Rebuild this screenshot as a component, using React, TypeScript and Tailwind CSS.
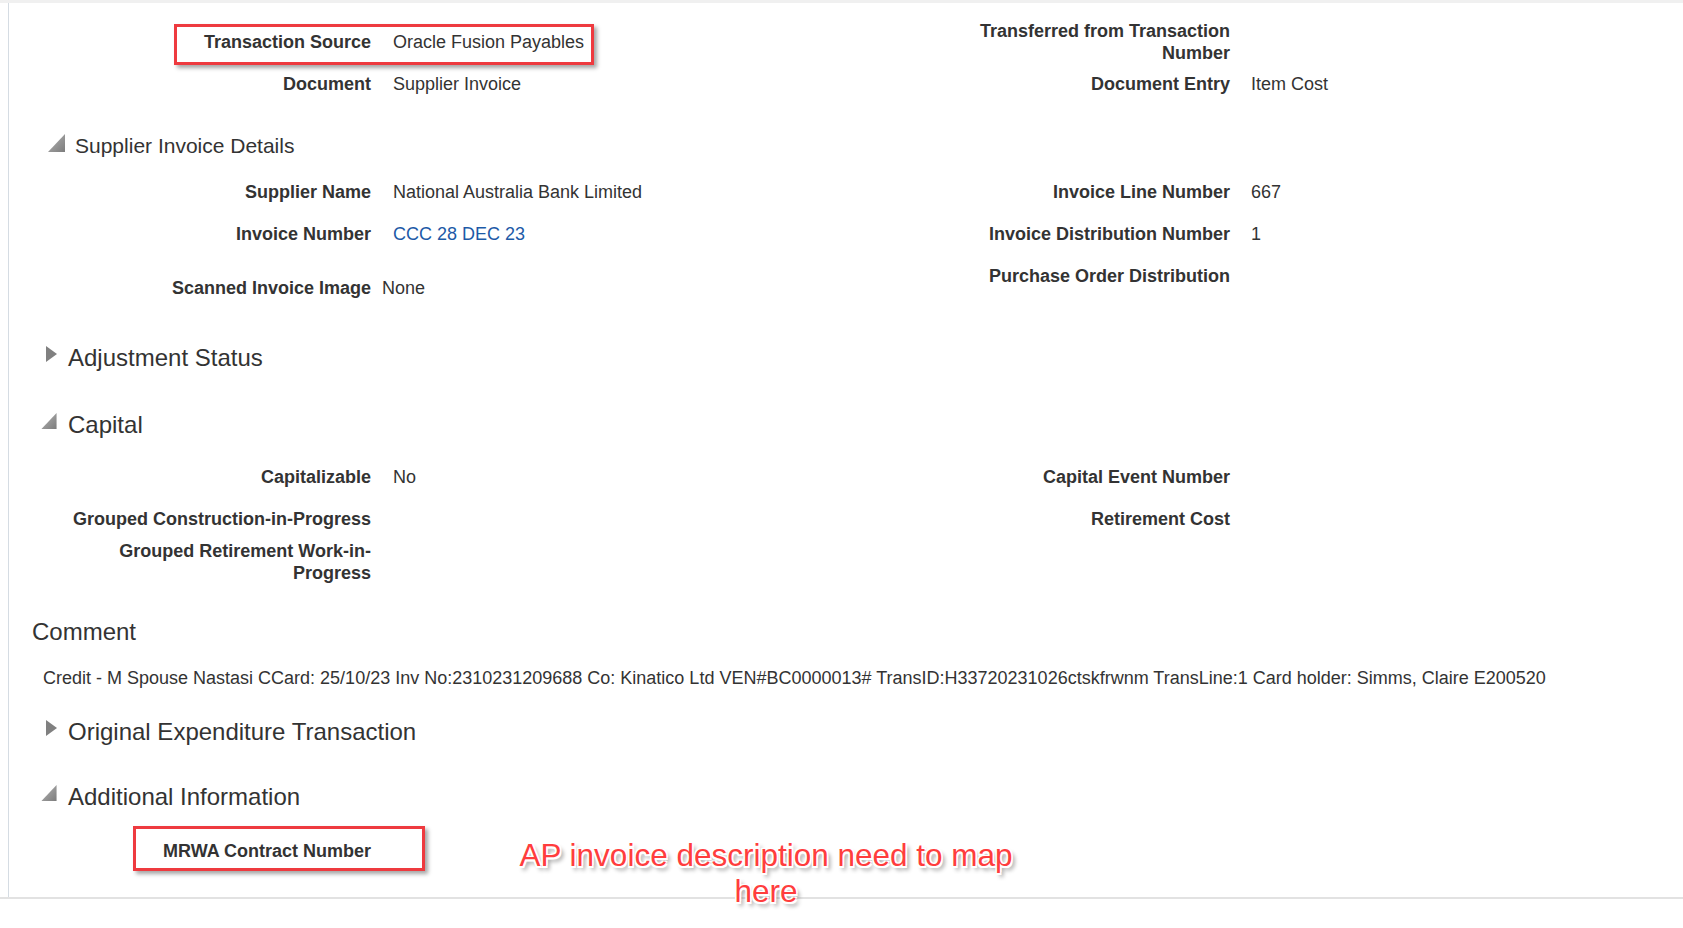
import React from "react";

function Expanded({ className = "" }: { className?: string }) {
  return (
    <svg width="17" height="18" viewBox="0 0 17 18" className={className}>
      <defs>
        <linearGradient id="tg" x1="0" y1="0" x2="1" y2="1">
          <stop offset="0" stopColor="#b5b5b5" />
          <stop offset="1" stopColor="#7c7c7c" />
        </linearGradient>
      </defs>
      <polygon points="17,0 17,18 0,18" fill="url(#tg)" />
    </svg>
  );
}

function Collapsed({ className = "" }: { className?: string }) {
  return (
    <svg width="11" height="16" viewBox="0 0 11 16" className={className}>
      <polygon points="0,0 11,8 0,16" fill="#808080" />
    </svg>
  );
}

function LField({
  label,
  value,
  h = "h-[42px]",
  link = false,
  gap = "pl-[22px]",
}: {
  label: React.ReactNode;
  value?: React.ReactNode;
  h?: string;
  link?: boolean;
  gap?: string;
}) {
  return (
    <div className={`flex items-center ${h}`}>
      <div className="w-[362px] shrink-0 text-right font-bold text-[#333333] leading-[22px]">{label}</div>
      <div className={`${gap} leading-[22px] ${link ? "text-[#1d5aa7]" : "text-[#333333]"}`}>{value}</div>
    </div>
  );
}

function RField({
  label,
  value,
  h = "h-[42px]",
}: {
  label: React.ReactNode;
  value?: React.ReactNode;
  h?: string;
}) {
  return (
    <div className={`flex items-center ${h}`}>
      <div className="w-[381px] shrink-0 text-right font-bold text-[#333333] leading-[22px]">{label}</div>
      <div className="pl-[21px] leading-[22px] text-[#333333]">{value}</div>
    </div>
  );
}

export default function App() {
  return (
    <div className="relative w-[1683px] h-[928px] overflow-hidden bg-white font-['Liberation_Sans',Arial,sans-serif] text-[18px] text-[#333333]">
      <div className="h-[3px] bg-[#f0f0f0]" />
      <div className="ml-[8px] h-[894px] border-l border-[#d5dce3] pt-[17px]">
        {/* top form */}
        <div className="flex">
          <div className="w-[840px] shrink-0">
            <LField h="h-[44px]" label="Transaction Source" value="Oracle Fusion Payables" />
            <LField h="h-[40px]" label="Document" value="Supplier Invoice" />
          </div>
          <div>
            <RField
              h="h-[44px]"
              label={
                <>
                  Transferred from Transaction
                  <br />
                  Number
                </>
              }
            />
            <RField h="h-[40px]" label="Document Entry" value="Item Cost" />
          </div>
        </div>

        {/* Supplier Invoice Details */}
        <div className="mt-[22px] h-[40px] flex items-center pl-[39px]">
          <Expanded className="-mt-[6px]" />
          <span className="ml-[10px] text-[21px] leading-[26px] text-[#333333]">Supplier Invoice Details</span>
        </div>
        <div className="mt-[5px] flex">
          <div className="w-[840px] shrink-0">
            <LField label="Supplier Name" value="National Australia Bank Limited" />
            <LField label="Invoice Number" value="CCC 28 DEC 23" link />
            <div className="mt-[12px]">
              <LField label="Scanned Invoice Image" value="None" gap="pl-[11px]" />
            </div>
          </div>
          <div>
            <RField label="Invoice Line Number" value="667" />
            <RField label="Invoice Distribution Number" value="1" />
            <RField label="Purchase Order Distribution" />
          </div>
        </div>

        {/* Adjustment Status */}
        <div className="mt-[29px] h-[40px] flex items-center pl-[37px]">
          <Collapsed className="-mt-[8px]" />
          <span className="ml-[11px] text-[24px] leading-[28px]">Adjustment Status</span>
        </div>

        {/* Capital */}
        <div className="mt-[27px] h-[40px] flex items-center pl-[32px]">
          <Expanded className="-mt-[8px] w-[16px] h-[16px]" />
          <span className="ml-[11px] text-[24px] leading-[28px]">Capital</span>
        </div>
        <div className="mt-[11px] flex">
          <div className="w-[840px] shrink-0">
            <LField label="Capitalizable" value="No" />
            <LField label="Grouped Construction-in-Progress" />
            <LField
              h="h-[44px]"
              label={
                <>
                  Grouped Retirement Work-in-
                  <br />
                  Progress
                </>
              }
            />
          </div>
          <div>
            <RField label="Capital Event Number" />
            <RField label="Retirement Cost" />
          </div>
        </div>

        {/* Comment */}
        <div className="mt-[30px] h-[36px] flex items-center pl-[23px] text-[24px] leading-[28px]">Comment</div>
        <div className="mt-[10px] h-[36px] flex items-center pl-[34px] text-[18px] whitespace-nowrap">
          Credit - M Spouse Nastasi CCard: 25/10/23 Inv No:2310231209688 Co: Kinatico Ltd VEN#BC0000013# TransID:H33720231026ctskfrwnm TransLine:1 Card holder: Simms, Claire E200520
        </div>

        {/* Original Expenditure Transaction */}
        <div className="mt-[16px] h-[40px] flex items-center pl-[37px]">
          <Collapsed className="-mt-[8px]" />
          <span className="ml-[11px] text-[24px] leading-[28px]">Original Expenditure Transaction</span>
        </div>

        {/* Additional Information */}
        <div className="mt-[25px] h-[40px] flex items-center pl-[32px]">
          <Expanded className="-mt-[8px] w-[16px] h-[16px]" />
          <span className="ml-[11px] text-[24px] leading-[28px]">Additional Information</span>
        </div>
        <div className="mt-[13px]">
          <LField label="MRWA Contract Number" />
        </div>
      </div>
      <div className="h-[2px] bg-[#e2e2e2]" />

      {/* annotation overlays */}
      <div className="absolute left-[174px] top-[24px] w-[420px] h-[41px] border-[3px] border-[#ee3a3f] shadow-[3px_3px_4px_rgba(0,0,0,0.35)]" />
      <div className="absolute left-[133px] top-[826px] w-[292px] h-[45px] border-[3px] border-[#ee3a3f] shadow-[3px_3px_4px_rgba(0,0,0,0.35)]" />
      <div className="absolute left-[766px] top-[837px] -translate-x-1/2 whitespace-nowrap text-center text-[31.5px] leading-[36px] text-[#ff3d3d] [text-shadow:-1.5px_-1.5px_0_#fff,1.5px_-1.5px_0_#fff,-1.5px_1.5px_0_#fff,1.5px_1.5px_0_#fff,0_2px_0_#fff,3px_4px_4px_rgba(0,0,0,0.45)]">
        AP invoice description need to map
        <br />
        here
      </div>
    </div>
  );
}
